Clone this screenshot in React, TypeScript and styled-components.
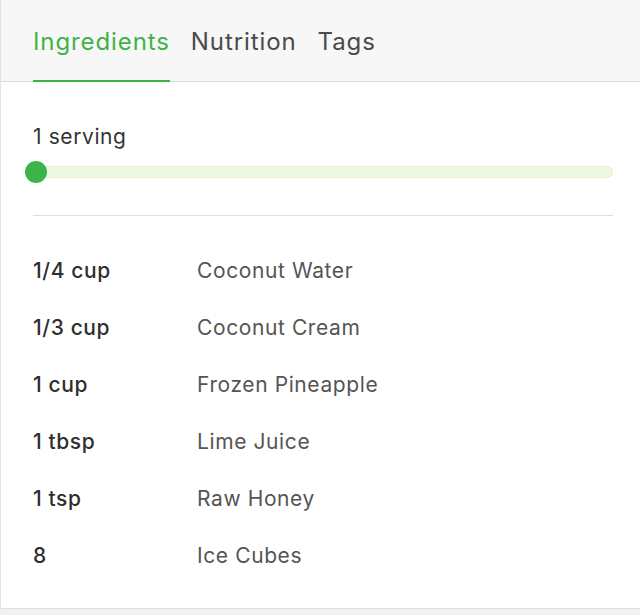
import React from 'react';
import styled, { createGlobalStyle } from 'styled-components';

const GlobalStyle = createGlobalStyle`
  html, body {
    margin: 0;
    padding: 0;
    background: #f2f2f2;
    font-family: Inter, "Noto Sans", sans-serif;
    -webkit-font-smoothing: antialiased;
  }
`;

const Panel = styled.div`
  width: 660px;
  height: 609px;
  box-sizing: border-box;
  background: #fff;
  border-left: 1px solid #e2e2e2;
  border-bottom: 1px solid #e0e0e0;
  display: flex;
  flex-direction: column;
`;

const TabBar = styled.div`
  height: 82px;
  box-sizing: border-box;
  background: #f7f7f7;
  border-bottom: 1px solid #dcdcdc;
  display: flex;
  align-items: stretch;
  gap: 21px;
  padding-left: 32px;
`;

const Tab = styled.div<{ $active?: boolean }>`
  display: flex;
  align-items: center;
  padding-top: 2px;
  font-size: 24px;
  font-weight: 400;
  letter-spacing: 0.9px;
  color: ${p => (p.$active ? '#3fb24a' : '#4a4a4a')};
  border-bottom: 2px solid ${p => (p.$active ? '#3fb24a' : 'transparent')};
  margin-bottom: -1px;
`;

const Body = styled.div`
  padding: 0 28px 0 32px;
  width: 580px;
`;

const ServingLabel = styled.div`
  margin-top: 42px;
  font-size: 21px;
  line-height: 26px;
  letter-spacing: 0.6px;
  color: #333;
`;

const Track = styled.div`
  position: relative;
  margin-top: 16px;
  height: 12px;
  border-radius: 6px;
  background: #eef9e4;
  box-shadow: inset 0 0 0 1px #e2f3cf;
`;

const Thumb = styled.div`
  position: absolute;
  left: -8px;
  top: -5px;
  width: 22px;
  height: 22px;
  border-radius: 50%;
  background: #3bb54a;
`;

const Divider = styled.div`
  margin-top: 37px;
  height: 1px;
  background: #dedede;
`;

const List = styled.div`
  padding-top: 26px;
  display: flex;
  flex-direction: column;
`;

const Row = styled.div`
  height: 57px;
  display: grid;
  grid-template-columns: 164px 1fr;
  align-items: center;
  font-size: 21px;
  letter-spacing: 0.6px;
`;

const Qty = styled.span`
  color: #2f2f2f;
  font-weight: 500;
`;

const Name = styled.span`
  color: #555;
`;

const ingredients = [
  ['1/4 cup', 'Coconut Water'],
  ['1/3 cup', 'Coconut Cream'],
  ['1 cup', 'Frozen Pineapple'],
  ['1 tbsp', 'Lime Juice'],
  ['1 tsp', 'Raw Honey'],
  ['8', 'Ice Cubes'],
];

const App: React.FC = () => (
  <>
    <GlobalStyle />
    <Panel>
      <TabBar>
        <Tab $active>Ingredients</Tab>
        <Tab>Nutrition</Tab>
        <Tab>Tags</Tab>
      </TabBar>
      <Body>
        <ServingLabel>1 serving</ServingLabel>
        <Track>
          <Thumb />
        </Track>
        <Divider />
        <List>
          {ingredients.map(([q, n]) => (
            <Row key={n}>
              <Qty>{q}</Qty>
              <Name>{n}</Name>
            </Row>
          ))}
        </List>
      </Body>
    </Panel>
  </>
);

export default App;
